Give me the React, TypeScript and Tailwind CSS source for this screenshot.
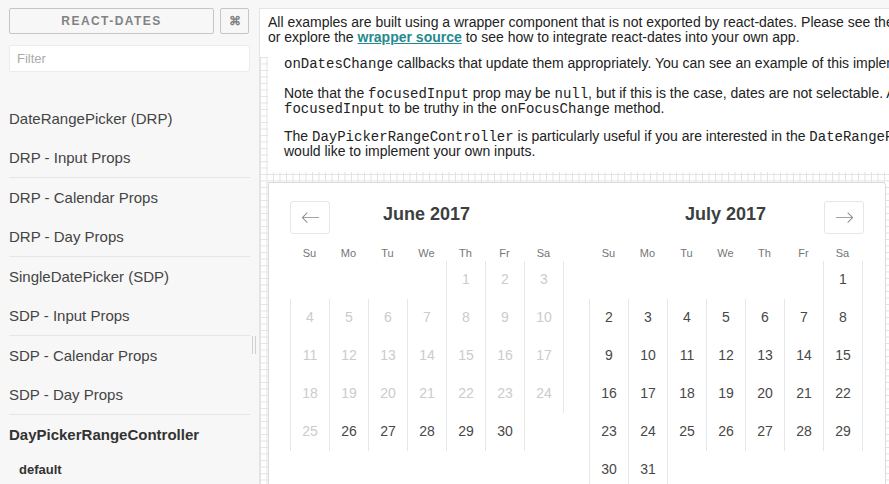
import React from "react";

type Item = { label: string; sep?: boolean };

const ITEMS: Item[] = [
  { label: "DateRangePicker (DRP)" },
  { label: "DRP - Input Props", sep: true },
  { label: "DRP - Calendar Props" },
  { label: "DRP - Day Props", sep: true },
  { label: "SingleDatePicker (SDP)" },
  { label: "SDP - Input Props", sep: true },
  { label: "SDP - Calendar Props" },
  { label: "SDP - Day Props", sep: true },
];

const WEEKDAYS = ["Su", "Mo", "Tu", "We", "Th", "Fr", "Sa"];

// build weeks for a month, offset = weekday of day 1
function weeks(offset: number, days: number) {
  const cells: (number | null)[] = [];
  for (let i = 0; i < offset; i++) cells.push(null);
  for (let d = 1; d <= days; d++) cells.push(d);
  while (cells.length % 7) cells.push(null);
  const out: (number | null)[][] = [];
  for (let i = 0; i < cells.length; i += 7) out.push(cells.slice(i, i + 7));
  return out;
}

function Code({ children }: { children: React.ReactNode }) {
  return <code className="font-['Liberation_Mono',monospace] text-[14px] leading-none">{children}</code>;
}

function LeftArrow() {
  return (
    <svg viewBox="0 0 1000 1000" className="h-[19px] w-[19px] fill-[#82888a]">
      <path d="M336 275L126 485h806c13 0 23 10 23 23s-10 23-23 23H126l210 210c11 11 11 21 0 32-5 5-10 7-16 7s-11-2-16-7L55 524c-11-11-11-21 0-32l249-249c21-22 53 10 32 32z" />
    </svg>
  );
}

function RightArrow() {
  return (
    <svg viewBox="0 0 1000 1000" className="h-[19px] w-[19px] fill-[#82888a]">
      <path d="M694 242l249 250c12 11 12 21 1 32L694 773c-5 5-10 7-16 7s-11-2-16-7c-11-11-11-21 0-32l210-210H68c-13 0-23-10-23-23s10-23 23-23h806L662 275c-21-22 11-54 32-33z" />
    </svg>
  );
}

function Month({ title, offset, days, disabledUpTo }: { title: string; offset: number; days: number; disabledUpTo: number }) {
  return (
    <div className="w-[299px] px-[13px]">
      <div className="h-[42px] pt-[20px] text-center text-[18px] font-bold leading-[22px] text-[#3c3f40]">{title}</div>
      <div className="grid h-[36px] grid-cols-[repeat(7,39px)] pt-[21px] text-center text-[11px] leading-[14px] text-[#757575]">
        {WEEKDAYS.map((w) => (
          <div key={w}>{w}</div>
        ))}
      </div>
      {weeks(offset, days).map((row, r) => (
        <div key={r} className="grid grid-cols-[repeat(7,39px)]">
          {row.map((d, i) =>
            d ? (
              <div
                key={i}
                className={`flex h-[38px] w-[40px] items-center justify-center border-x border-[#e4e7e7] pb-[2px] text-[14px] ${
                  d <= disabledUpTo ? "text-[#cacccd]" : "text-[#484848]"
                }`}
              >
                {d}
              </div>
            ) : (
              <div key={i} className="h-[38px]" />
            )
          )}
        </div>
      ))}
    </div>
  );
}

export default function App() {
  return (
    <div className="flex h-[484px] w-[889px] overflow-hidden bg-[#f7f7f7] font-['Liberation_Sans',Arial,sans-serif]">
      {/* sidebar */}
      <div className="relative w-[259px] shrink-0 px-[9px] pt-[8px]">
        <div className="flex gap-[6px]">
          <div className="flex h-[26px] w-[205px] items-center justify-center rounded-[2px] border border-[#c6c6c6] text-[12px] font-bold tracking-[0.12em] text-[#828282]">
            REACT-DATES
          </div>
          <div className="flex h-[26px] w-[29px] items-center justify-center rounded-[2px] border border-[#c6c6c6] text-[12px] font-bold text-[#828282]">
            ⌘
          </div>
        </div>
        <div className="mt-[11px] flex h-[27px] items-center rounded-[2px] border border-[#ececec] bg-white px-[7px] text-[13px] text-[#aaaaaa]">
          Filter
        </div>
        <div className="mt-[27px]">
          {ITEMS.map((it) => (
            <div
              key={it.label}
              className={`flex h-[39.5px] items-center text-[15px] text-[#444] ${it.sep ? "border-b border-[#e6e6e6]" : ""}`}
            >
              {it.label}
            </div>
          ))}
          <div className="flex h-[39.5px] items-center text-[15px] font-bold text-[#333]">DayPickerRangeController</div>
          <div className="flex h-[30px] items-center pl-[10px] text-[13px] font-bold text-[#333]">default</div>
        </div>
        <div className="absolute left-[252px] top-[336px] flex gap-[2px]">
          <div className="h-[18px] w-px bg-[#cfcfcf]" />
          <div className="h-[18px] w-px bg-[#cfcfcf]" />
        </div>
      </div>

      {/* preview panel */}
      <div className="mt-[8px] flex min-w-0 flex-1 flex-col overflow-hidden border-l border-t border-[#e4e4e4] bg-white">
        <div className="h-[48px] shrink-0 whitespace-nowrap px-[8px] pt-[6px] text-[14px] leading-[15px] text-[#222]">
          <div>
            All examples are built using a wrapper component that is not exported by react-dates. Please see the example stories
          </div>
          <div>
            or explore the{" "}
            <a className="font-bold text-[#258a8e] underline">wrapper source</a> to see how to integrate react-dates into
            your own app.
          </div>
        </div>

        <div className="flex-1 bg-[linear-gradient(to_right,#e2e2e2_1px,transparent_1px),linear-gradient(to_bottom,#e2e2e2_1px,transparent_1px)] bg-[size:6.5px_6.5px] pl-[8px]">
          <div className="h-[115px] overflow-hidden whitespace-nowrap bg-white pl-[16px] text-[14px] leading-[15px] text-[#222]">
            <p className="-mt-[1px] mb-[15px]">
              <Code>onDatesChange</Code> callbacks that update them appropriately. You can see an example of this implementation
            </p>
            <p className="mb-[13px]">
              Note that the <Code>focusedInput</Code> prop may be <Code>null</Code>, but if this is the case, dates are not
              selectable. As a result, in the example wrapper, we always force
              <br />
              <Code>focusedInput</Code> to be truthy in the <Code>onFocusChange</Code> method.
            </p>
            <p>
              The <Code>DayPickerRangeController</Code> is particularly useful if you are interested in the{" "}
              <Code>DateRangePicker</Code> functionality and calendar presentation, but
              <br />
              would like to implement your own inputs.
            </p>
          </div>

          <div className="relative mt-[10px] h-[320px] w-[618px] rounded-tr-[3px] border border-[#dbdbdb] bg-white">
            <div className="absolute left-[21px] top-[18px] flex h-[33px] w-[40px] items-center justify-center rounded-[3px] border border-[#e4e7e7] bg-white">
              <LeftArrow />
            </div>
            <div className="absolute right-[21px] top-[18px] flex h-[33px] w-[40px] items-center justify-center rounded-[3px] border border-[#e4e7e7] bg-white">
              <RightArrow />
            </div>
            <div className="flex pl-[8px]">
              <Month title="June 2017" offset={4} days={30} disabledUpTo={25} />
              <Month title="July 2017" offset={6} days={31} disabledUpTo={0} />
            </div>
          </div>
        </div>
      </div>
    </div>
  );
}
